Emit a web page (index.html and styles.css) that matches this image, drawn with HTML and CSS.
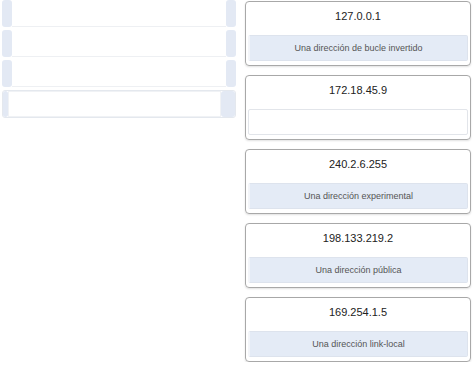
FILE: index.html
```html
<!DOCTYPE html>
<html lang="es">

<head>
    <meta charset="UTF-8">
    <meta name="viewport" content="width=device-width, initial-scale=1.0">
    <title>Direcciones IPv4</title>
    <link rel="stylesheet" href="styles.css">
</head>

<body>

    <div id="match-board">
        <div id="answer-slots">
            <div class="slot">
                <div class="slot-tab"></div>
                <div class="slot-middle"></div>
                <div class="slot-tab"></div>
            </div>
            <div class="slot">
                <div class="slot-tab"></div>
                <div class="slot-middle"></div>
                <div class="slot-tab"></div>
            </div>
            <div class="slot">
                <div class="slot-tab"></div>
                <div class="slot-middle"></div>
                <div class="slot-tab"></div>
            </div>
            <div class="slot active">
                <div class="slot-tab"></div>
                <div class="slot-middle"></div>
                <div class="slot-tab"></div>
            </div>
        </div>

        <div id="address-cards">
            <div class="card">
                <div class="card-ip">127.0.0.1</div>
                <div class="card-drop filled">Una dirección de bucle invertido</div>
            </div>
            <div class="card">
                <div class="card-ip">172.18.45.9</div>
                <div class="card-drop"></div>
            </div>
            <div class="card">
                <div class="card-ip">240.2.6.255</div>
                <div class="card-drop filled">Una dirección experimental</div>
            </div>
            <div class="card">
                <div class="card-ip">198.133.219.2</div>
                <div class="card-drop filled">Una dirección pública</div>
            </div>
            <div class="card">
                <div class="card-ip">169.254.1.5</div>
                <div class="card-drop filled">Una dirección link-local</div>
            </div>
        </div>
    </div>

</body>

</html>
```

FILE: styles.css
```css
body {
    font-family: 'Liberation Sans', Arial, sans-serif;
    margin: 0;
    padding: 0;
    background-color: #fff;
}

#match-board {
    display: flex;
    align-items: flex-start;
    gap: 9px;
    padding-left: 2px;
}

#answer-slots {
    width: 234px;
    display: flex;
    flex-direction: column;
    gap: 3px;
}

.slot {
    display: flex;
    height: 27px;
}

.slot-tab {
    width: 10px;
    background-color: #e3e9f4;
    border-radius: 3px;
}

.slot-middle {
    flex: 1;
    border-bottom: 1px solid #eef0f3;
}

.slot.active {
    border: 1px solid #e4e8ee;
    border-radius: 3px;
    box-sizing: border-box;
    height: 28px;
}

.slot.active .slot-tab:first-child {
    width: 5px;
}

.slot.active .slot-tab:last-child {
    width: 14px;
}

.slot.active .slot-middle {
    border: 1px solid #f0f2f5;
    background-color: #fff;
}

#address-cards {
    width: 226px;
    margin-top: 1px;
    display: flex;
    flex-direction: column;
    gap: 9px;
}

.card {
    height: 65px;
    box-sizing: border-box;
    border: 1px solid #a8a8a8;
    border-radius: 4px;
    box-shadow: 0 1px 2px rgba(0, 0, 0, 0.12);
    padding: 0 1px;
}

.card-ip {
    height: 29px;
    line-height: 29px;
    margin-bottom: 4px;
    text-align: center;
    font-size: 11px;
    color: #222;
}

.card-drop {
    height: 26px;
    box-sizing: border-box;
    margin: 0 1px;
    border: 1px solid #e2e5ea;
    border-radius: 2px;
    background-color: #fff;
    display: flex;
    justify-content: center;
    align-items: center;
    font-size: 9px;
    color: #555;
}

.card-drop.filled {
    background-color: #e4ebf6;
    border-color: #dde3ed;
    border-left: 2px solid #f3f5f9;
}
```
